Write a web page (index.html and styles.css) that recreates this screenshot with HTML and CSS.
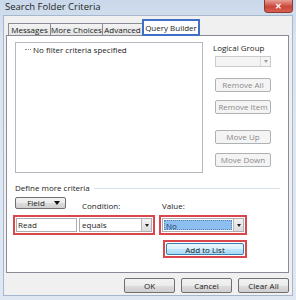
FILE: index.html
```html
<!DOCTYPE html>
<html lang="en">
<head>
<meta charset="UTF-8">
<meta name="viewport" content="width=device-width,initial-scale=1">
<title>Search Folder Criteria</title>
<link rel="stylesheet" href="styles.css">
</head>
<body>
<div class="window">
  <!-- Title bar -->
  <div class="titlebar">
    <span class="title">Search Folder Criteria</span>
    <span class="close">&#x2715;</span>
  </div>

  <div class="client">
    <!-- Tabs -->
    <div class="tabs">
      <div class="tab w-msg">Messages</div>
      <div class="tab w-more">More Choices</div>
      <div class="tab w-adv">Advanced</div>
      <div class="tab w-qb active">Query Builder</div>
    </div>

    <div class="panel">
      <div class="top">
        <div class="list">
          <div class="item"><span class="dots"></span>No filter criteria specified</div>
        </div>
        <div class="side">
          <div class="lbl">Logical Group</div>
          <div class="combo off"><span class="val"></span><span class="arrow"></span></div>
          <button class="btn off b-all">Remove All</button>
          <button class="btn off b-item">Remove Item</button>
          <button class="btn off b-up">Move Up</button>
          <button class="btn off b-down">Move Down</button>
        </div>
      </div>

      <!-- Define more criteria -->
      <div class="criteria">
        <div class="legend"><span>Define more criteria</span></div>
        <div class="row-a">
          <button class="btn field">Field <span class="tri"></span></button>
          <span class="cap cap-cond">Condition:</span>
          <span class="cap">Value:</span>
        </div>
        <div class="row-b">
          <div class="mark mark-left">
            <div class="textbox">Read</div>
            <div class="combo cond"><span class="val">equals</span><span class="arrow"></span></div>
          </div>
          <div class="mark mark-right">
            <div class="combo value"><span class="val"><span class="sel">No</span></span><span class="arrow"></span></div>
          </div>
        </div>
        <div class="row-c">
          <div class="mark mark-add">
            <button class="btn add">Add to List</button>
          </div>
        </div>
      </div>
    </div>

    <div class="footer">
      <button class="btn">OK</button>
      <button class="btn">Cancel</button>
      <button class="btn">Clear All</button>
    </div>
  </div>
</div>
</body>
</html>
```

FILE: styles.css
```css
/* ------------- BASE ------------- */
:root{
  --frame:#d3dfed;
  --face:#f0f0f0;
  --edge:#898c95;
  --mark:#d9474c;
  --ink:#1b1b1b;
}
*{box-sizing:border-box}
body{margin:0;font-family:'Open Sans',sans-serif;font-size:8px;color:var(--ink)}
button{font-family:inherit;font-size:8px;color:var(--ink);margin:0;padding:0}

.window{
  width:296px;height:300px;
  background:linear-gradient(#c9d8ea,#dbe5f1 40px,#dfe8f2);
  display:flex;flex-direction:column;
}

/* Title bar */
.titlebar{height:15px;display:flex;align-items:flex-start;padding-left:5px}
.title{font-size:9.5px;line-height:14px;color:#1e1e1e}
.close{
  margin-left:auto;margin-right:3px;width:29px;height:13px;
  background:linear-gradient(#e8a198,#c9463a 55%,#d8604f);
  border:1px solid #8a3b35;border-top:none;border-radius:0 0 4px 4px;
  color:#fff;font-size:8px;font-weight:700;line-height:12px;text-align:center;
}

/* Client area */
.client{
  margin:0 3px;height:281px;background:var(--face);
  border:1px solid #a5b7cd;padding:0 3px 0 2px;
}

/* Tabs */
.tabs{display:flex;align-items:flex-end;height:19px;padding-left:2px;position:relative;z-index:1}
.tab{
  height:12px;line-height:11px;text-align:center;
  border:1px solid var(--edge);border-bottom:none;margin-right:-1px;
  background:linear-gradient(#f3f3f3,#e3e3e3);font-size:8px;
}
.w-msg{width:43px}
.w-more{width:53px}
.w-adv{width:41px}
.w-qb{width:58px}
.tab.active{
  height:17px;line-height:13px;background:#fff;margin-bottom:-1px;
  border:2px solid #4070c4;
}

/* Panel */
.panel{
  height:238px;background:#fff;border:1px solid var(--edge);
  padding:6px 8px 0 8px;
}
.top{display:flex}
.list{width:188px;height:131px;border:1px solid #b5b9bf;padding-top:2px}
.item{display:flex;align-items:center;line-height:9px;padding-left:9px}
.dots{width:6px;border-top:1px dotted #8a8a8a;margin-right:2px}

.side{margin-left:10px;width:60px;display:flex;flex-direction:column;align-items:flex-start}
.lbl{line-height:11px}
.side .combo{margin:3px 0 0 2px;width:56px;height:11px}
.side .btn{margin-left:2px;width:56px;height:14px}
.b-all{margin-top:11px}
.b-item{margin-top:8px}
.b-up{margin-top:16px}
.b-down{margin-top:9px}

/* Buttons */
.btn{
  border:1px solid #707070;border-radius:2px;
  background:linear-gradient(#f2f2f2,#ebebeb 50%,#dddddd 51%,#cfcfcf);
  line-height:12px;text-align:center;
}
.btn.off{border-color:#adb2b5;background:#f4f4f4;color:#8a8a8a}

/* Combos */
.combo{display:flex;border:1px solid #abadb3;background:#fff;height:14px}
.combo .val{flex:1;line-height:12px;padding-left:2px;display:flex;align-items:center}
.combo .arrow{
  width:10px;border-left:1px solid #b7b7b7;
  background:linear-gradient(#f2f2f2,#dcdcdc);
  display:flex;align-items:center;justify-content:center;
}
.combo .arrow::after{
  content:"";border-left:2.5px solid transparent;border-right:2.5px solid transparent;
  border-top:3px solid #222;
}
.combo.off{background:#f4f4f4;border-color:#c9cbcf}
.combo.off .arrow{background:#f4f4f4;border-left-color:#d8d8d8}
.combo.off .arrow::after{border-top-color:#9a9a9a}

/* Criteria */
.criteria{display:flex;flex-direction:column}
.legend{margin-top:10px;display:flex;align-items:center;line-height:10px}
.legend::after{content:"";flex:1;border-top:1px solid #d5dfe5;margin-left:4px}

.row-a{margin-top:4px;height:14px;display:flex;align-items:flex-start}
.field{width:51px;height:12px;display:flex;align-items:center;justify-content:center;gap:9px;padding-left:6px}
.tri{border-left:3px solid transparent;border-right:3px solid transparent;border-top:4px solid #111}
.cap{line-height:10px;align-self:flex-end}
.cap-cond{margin-left:16px;width:80px}

.row-b{margin-top:4px;display:flex;gap:4px;margin-left:-2px}
.mark{border:2px solid var(--mark);padding:1px;display:flex;gap:2px}
.mark-left{width:142px;height:20px}
.mark-right{width:88px;height:20px}
.textbox{width:61px;height:14px;border:1px solid #abadb3;line-height:12px;padding-left:1px}
.cond{width:73px}
.value{width:82px}
.value .val{padding:1px}
.sel{flex:1;height:100%;background:#8cbff0;border:1px dotted #5b7fb0;color:#1f3c66;line-height:9px;padding-left:1px}

.row-c{margin-top:5px;display:flex}
.mark-add{margin-left:148px;width:84px;height:18px}
.add{
  width:100%;height:100%;border-color:#3c7fb1;
  background:linear-gradient(#eaf6fd,#d9f0fc 50%,#bee6fd 51%,#a7d9f5);
}

/* Footer */
.footer{margin-top:5px;display:flex;justify-content:flex-end;gap:6px}
.footer .btn{width:51px;height:15px}
```
